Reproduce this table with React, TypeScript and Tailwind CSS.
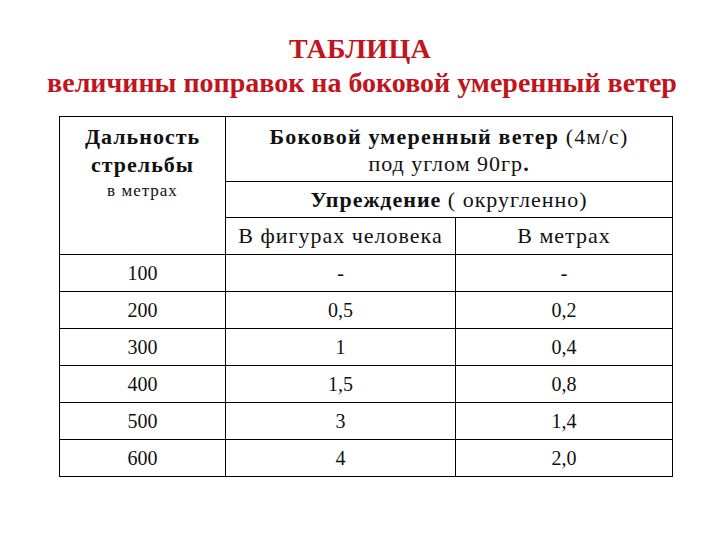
import React from 'react';

const rows = [
  ['100', '-', '-'],
  ['200', '0,5', '0,2'],
  ['300', '1', '0,4'],
  ['400', '1,5', '0,8'],
  ['500', '3', '1,4'],
  ['600', '4', '2,0'],
];

const serif = { fontFamily: '"Liberation Serif", "Times New Roman", serif' };

export default function App() {
  return (
    <div className="w-[720px] h-[540px] bg-white text-black flex flex-col items-center" style={serif}>
      <h1 className="mt-[33px] text-[28px] leading-[32px] font-bold text-[#c2141c] tracking-[0.3px]">ТАБЛИЦА</h1>
      <h2 className="mt-[2px] ml-[4px] text-[28px] leading-[32px] font-bold text-[#c2141c]">
        величины поправок на боковой умеренный ветер
      </h2>

      <table className="mt-[17px] ml-[12px] w-[613px] table-fixed border-collapse text-[20px] text-[#111]">
        <colgroup>
          <col className="w-[166px]" />
          <col className="w-[230px]" />
          <col className="w-[217px]" />
        </colgroup>
        <tbody>
          <tr className="h-[65px]">
            <td rowSpan={3} className="border border-black align-top text-center pt-[6px] tracking-[1px]">
              <div className="font-bold text-[22px] leading-[28px]">Дальность</div>
              <div className="font-bold text-[22px] leading-[28px]">стрельбы</div>
              <div className="text-[17px] leading-[24px]">в метрах</div>
            </td>
            <td colSpan={2} className="border border-black text-center align-top pt-[6px]">
              <div className="text-[22px] leading-[28px] tracking-[1.2px] whitespace-nowrap">
                <span className="font-bold">Боковой умеренный ветер</span> (4м/с)
              </div>
              <div className="text-[22px] leading-[26px] tracking-[1px]">
                под углом 90гр<span className="font-bold">.</span>
              </div>
            </td>
          </tr>
          <tr className="h-[36px]">
            <td colSpan={2} className="border border-black text-center text-[22px] leading-[24px] tracking-[1px]">
              <span className="font-bold">Упреждение</span> ( округленно)
            </td>
          </tr>
          <tr className="h-[37px]">
            <td className="border border-black text-center text-[22px] leading-[24px] tracking-[1px] whitespace-nowrap">
              В фигурах человека
            </td>
            <td className="border border-black text-center text-[22px] leading-[24px] tracking-[1px]">В метрах</td>
          </tr>
          {rows.map((r) => (
            <tr key={r[0]} className="h-[37px]">
              {r.map((c, i) => (
                <td key={i} className="border border-black text-center leading-[24px]">
                  {c}
                </td>
              ))}
            </tr>
          ))}
        </tbody>
      </table>
    </div>
  );
}
